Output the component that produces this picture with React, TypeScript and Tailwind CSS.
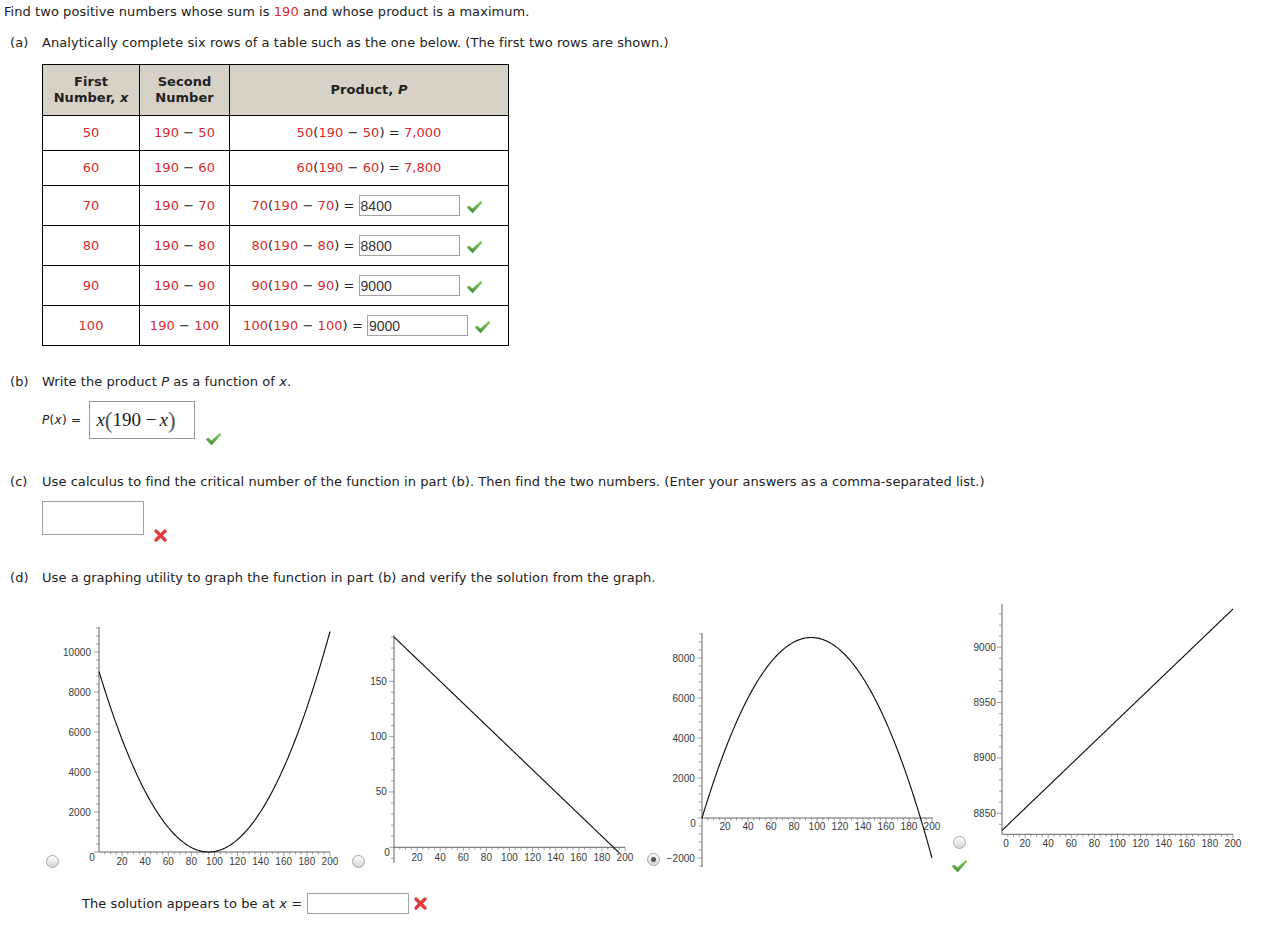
import React from 'react';

const red = 'text-[#dc2a2e]';

function Check({ className = '' }: { className?: string }) {
  return (
    <svg width="17" height="14" viewBox="0 0 17 14" className={className}>
      <defs>
        <linearGradient id="chk" x1="0" y1="0" x2="0" y2="1">
          <stop offset="0" stopColor="#8fd06a" />
          <stop offset="1" stopColor="#3d8f2c" />
        </linearGradient>
      </defs>
      <path d="M0.8 7.6 L3.2 5.6 L6.4 8.6 L14.6 0.9 L16.4 2.6 L6.6 13.2 Z" fill="url(#chk)" />
    </svg>
  );
}

function Cross({ className = '' }: { className?: string }) {
  return (
    <svg width="15" height="15" viewBox="0 0 15 15" className={className}>
      <g stroke="#e23b3b" strokeWidth="3.4" strokeLinecap="round">
        <line x1="3" y1="3" x2="12" y2="12" />
        <line x1="12" y1="3" x2="3" y2="12" />
      </g>
    </svg>
  );
}

function Radio({ on = false }: { on?: boolean }) {
  return (
    <span className="flex w-[13px] h-[13px] items-center justify-center rounded-full border border-[#a8a8a8] bg-linear-to-b from-white to-[#d4d4d4]">
      {on && <span className="w-[5px] h-[5px] rounded-full bg-[#555]" />}
    </span>
  );
}

function Part({ label, className = '', children }: { label: string; className?: string; children: React.ReactNode }) {
  return (
    <div className={`flex pl-[10px] ${className}`}>
      <span className="w-[32px] shrink-0">{label}</span>
      <span>{children}</span>
    </div>
  );
}

function Expr({ a, b }: { a: string; b: string }) {
  return (
    <>
      <span className={red}>{a}</span>(<span className={red}>190</span> − <span className={red}>{b}</span>)
    </>
  );
}

type Row = { x: string; p?: string; v?: string };

const rows: Row[] = [
  { x: '50', p: '7,000' },
  { x: '60', p: '7,800' },
  { x: '70', v: '8400' },
  { x: '80', v: '8800' },
  { x: '90', v: '9000' },
  { x: '100', v: '9000' },
];

type GraphProps = {
  x0: number;
  w: number;
  ox: number;
  oy: number;
  sx: number;
  sy: number;
  v0: number;
  yTop: number;
  yBot: number;
  xEnd: number;
  yStep: number;
  yMinor: number;
  yLabels: number[];
  labelRight: number;
  zero?: [number, number];
  xLabelY: number;
  xZero?: number;
  f: (x: number) => number;
  xTo: number;
};

function Graph(p: GraphProps) {
  const px = (x: number) => p.ox + x * p.sx;
  const py = (v: number) => p.oy - (v - p.v0) * p.sy;

  const pts: string[] = [];
  for (let i = 0; i <= 240; i++) {
    const x = (p.xTo * i) / 240;
    pts.push(`${px(x).toFixed(2)},${py(p.f(x)).toFixed(2)}`);
  }

  const vTop = p.v0 + (p.oy - p.yTop) / p.sy;
  const vBot = p.v0 + (p.oy - p.yBot) / p.sy;
  const yTicks: number[] = [];
  for (let k = Math.ceil(vBot / p.yMinor); k * p.yMinor <= vTop; k++) yTicks.push(k * p.yMinor);

  const xTicks: number[] = [];
  for (let k = 1; k <= 40; k++) xTicks.push(k * 5);

  return (
    <svg width={p.w} height={280} viewBox={`${p.x0} 600 ${p.w} 280`} className="block shrink-0">
      <g stroke="#8a8a8a" strokeWidth="0.8">
        {yTicks.map((v) => {
          const major = v % p.yStep === 0;
          return <line key={v} x1={p.ox - (major ? 5 : 3)} x2={p.ox} y1={py(v)} y2={py(v)} />;
        })}
        {xTicks.map((x) => {
          const major = x % 20 === 0;
          return <line key={x} x1={px(x)} x2={px(x)} y1={p.oy} y2={p.oy + (major ? 4 : 2.5)} />;
        })}
      </g>
      <line x1={p.ox} x2={p.ox} y1={p.yTop} y2={p.yBot} stroke="#555" strokeWidth="0.9" />
      <line x1={p.ox} x2={p.xEnd} y1={p.oy} y2={p.oy} stroke="#555" strokeWidth="0.9" />
      <g fill="#3a3a3a" fontSize="10" fontFamily="'Liberation Sans', Arial, sans-serif">
        {p.yLabels.map((v) => (
          <text key={v} x={p.labelRight} y={py(v)} textAnchor="end" dominantBaseline="central">
            {v < 0 ? `−${-v}` : v}
          </text>
        ))}
        {p.zero && (
          <text x={p.zero[0]} y={p.zero[1]} textAnchor="middle" dominantBaseline="central">
            0
          </text>
        )}
        {p.xZero !== undefined && (
          <text x={p.xZero} y={p.xLabelY} textAnchor="middle" dominantBaseline="central">
            0
          </text>
        )}
        {xTicks
          .filter((x) => x % 20 === 0)
          .map((x) => (
            <text key={x} x={px(x)} y={p.xLabelY} textAnchor="middle" dominantBaseline="central">
              {x}
            </text>
          ))}
      </g>
      <polyline points={pts.join(' ')} fill="none" stroke="#111" strokeWidth="1.15" />
    </svg>
  );
}

export default function App() {
  return (
    <div className="w-[1262px] min-h-[931px] bg-white pt-[4px] font-['DejaVu_Sans',Verdana,sans-serif] text-[13px] leading-4 tracking-[0.06px] text-[#222]">
      <p className="pl-[4px]">
        Find two positive numbers whose sum is <span className={red}>190</span> and whose product is a maximum.
      </p>

      <Part label="(a)" className="mt-[15px]">
        Analytically complete six rows of a table such as the one below. (The first two rows are shown.)
      </Part>

      <div className="pl-[42px] mt-[13px]">
        <table className="border-collapse text-center">
          <thead>
            <tr className="bg-[#d6d2c8] font-bold">
              <th className="w-[97px] h-[51px] border border-black">
                First
                <br />
                Number, <i>x</i>
              </th>
              <th className="w-[90px] border border-black">
                Second
                <br />
                Number
              </th>
              <th className="w-[279px] border border-black">
                Product, <i>P</i>
              </th>
            </tr>
          </thead>
          <tbody>
            {rows.map((r) => (
              <tr key={r.x}>
                <td className={`border border-black ${r.p ? 'h-[35px]' : 'h-[40px]'} ${red}`}>{r.x}</td>
                <td className="border border-black">
                  <span className={red}>190</span> − <span className={red}>{r.x}</span>
                </td>
                <td className="border border-black">
                  {r.p ? (
                    <span>
                      <Expr a={r.x} b={r.x} /> = <span className={red}>{r.p}</span>
                    </span>
                  ) : (
                    <div className="flex items-center justify-center pr-[4px]">
                      <span>
                        <Expr a={r.x} b={r.x} /> =
                      </span>
                      <input
                        readOnly
                        value={r.v}
                        className="ml-[4px] w-[101px] h-[21px] border border-[#a3a3a3] px-[1px] font-['Liberation_Sans',Arial,sans-serif] text-[14px] tracking-normal text-[#333] outline-none"
                      />
                      <Check className="ml-[6px] mt-[3px]" />
                    </div>
                  )}
                </td>
              </tr>
            ))}
          </tbody>
        </table>
      </div>

      <Part label="(b)" className="mt-[28px]">
        Write the product <i>P</i> as a function of <i>x</i>.
      </Part>
      <div className="pl-[42px] mt-[11px] flex items-end">
        <span className="self-center text-[12px] tracking-[0.3px]">
          <i>P</i>(<i>x</i>) =
        </span>
        <div className="ml-[8px] w-[106px] h-[38px] border border-[#9a9a9a] flex items-center pl-[6px] font-['Liberation_Serif','Times_New_Roman',serif] text-[19px] tracking-normal text-[#222]">
          <i>x</i>
          <span className="text-[23px] text-[#555] leading-none">(</span>
          <span>190 − </span>
          <i className="ml-[3px]">x</i>
          <span className="text-[23px] text-[#555] leading-none">)</span>
        </div>
        <Check className="ml-[10px] mb-[-7px]" />
      </div>

      <Part label="(c)" className="mt-[35px]">
        Use calculus to find the critical number of the function in part (b). Then find the two numbers. (Enter your
        answers as a comma-separated list.)
      </Part>
      <div className="pl-[42px] mt-[11px] flex items-end">
        <div className="w-[102px] h-[34px] border border-[#a3a3a3]" />
        <Cross className="ml-[9px] mb-[-8px]" />
      </div>

      <Part label="(d)" className="mt-[35px]">
        Use a graphing utility to graph the function in part (b) and verify the solution from the graph.
      </Part>

      <div className="mt-[14px] h-[280px] pl-[46px] flex">
        <div className="flex">
          <div className="pt-[255px]">
            <Radio />
          </div>
          <Graph
            x0={59}
            w={293}
            ox={99}
            oy={852}
            sx={1.155}
            sy={0.02}
            v0={0}
            yTop={627}
            yBot={852}
            xEnd={330}
            yStep={2000}
            yMinor={400}
            yLabels={[2000, 4000, 6000, 8000, 10000]}
            labelRight={91}
            zero={[92, 857]}
            xLabelY={861}
            f={(x) => (x - 95) * (x - 95)}
            xTo={200}
          />
        </div>
        <div className="flex">
          <div className="pt-[255px]">
            <Radio />
          </div>
          <Graph
            x0={365}
            w={282}
            ox={394}
            oy={847.3}
            sx={1.155}
            sy={1.107}
            v0={0}
            yTop={635}
            yBot={863}
            xEnd={625}
            yStep={50}
            yMinor={10}
            yLabels={[50, 100, 150]}
            labelRight={387}
            zero={[387, 852]}
            xLabelY={857}
            f={(x) => 190 - x}
            xTo={195}
          />
        </div>
        <div className="flex">
          <div className="pt-[253px]">
            <Radio on />
          </div>
          <Graph
            x0={660}
            w={291}
            ox={702}
            oy={818}
            sx={1.15}
            sy={0.02}
            v0={0}
            yTop={633}
            yBot={867}
            xEnd={933}
            yStep={2000}
            yMinor={400}
            yLabels={[-2000, 2000, 4000, 6000, 8000]}
            labelRight={695}
            zero={[693, 823]}
            xLabelY={826}
            f={(x) => x * (190 - x)}
            xTo={200}
          />
        </div>
        <div className="flex">
          <div className="pt-[236px] w-[17px] flex flex-col items-center">
            <Radio />
            <Check className="mt-[10px]" />
          </div>
          <Graph
            x0={968}
            w={282}
            ox={1002}
            oy={834.3}
            sx={1.155}
            sy={1.107}
            v0={8831}
            yTop={604}
            yBot={834.3}
            xEnd={1233}
            yStep={50}
            yMinor={10}
            yLabels={[8850, 8900, 8950, 9000]}
            labelRight={996}
            xZero={1006}
            xLabelY={843}
            f={(x) => 8834.5 + x}
            xTo={200}
          />
        </div>
      </div>

      <div className="mt-[13px] pl-[82px] flex items-center">
        <span>
          The solution appears to be at <i>x</i> =
        </span>
        <div className="ml-[5px] w-[102px] h-[21px] border border-[#a3a3a3]" />
        <Cross className="ml-[4px]" />
      </div>
    </div>
  );
}
